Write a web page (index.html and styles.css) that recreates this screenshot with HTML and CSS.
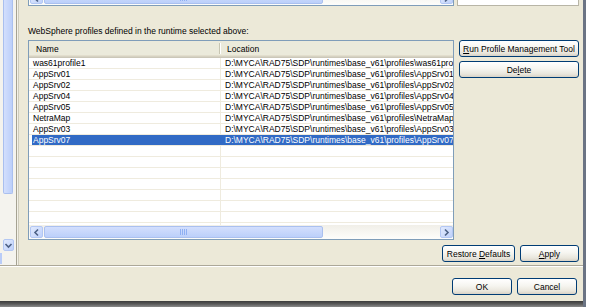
FILE: index.html
```html
<!DOCTYPE html>
<html>
<head>
<meta charset="utf-8">
<link rel="stylesheet" href="styles.css">
</head>
<body>
<div class="window">
  <div class="main">
    <div class="nav">
      <div class="vscroll">
        <div class="vthumb"></div>
        <div class="vtrack"></div>
        <div class="sbtn vbtn"><svg width="9" height="9" viewBox="0 0 9 9"><path d="M1.5 3 L4.5 6 L7.5 3" fill="none" stroke="#4d6185" stroke-width="1.6"/></svg></div>
      </div>
      <div class="nav-foot"><div class="hsliver"></div></div>
    </div>
    <div class="sash"></div>
    <div class="page">
      <div class="remnant">
        <div class="remnant-table">
          <div class="hscroll">
            <div class="sbtn"><svg width="9" height="9" viewBox="0 0 9 9"><path d="M6 1.5 L3 4.5 L6 7.5" fill="none" stroke="#4d6185" stroke-width="1.6"/></svg></div>
            <div class="hthumb"><svg width="8" height="6" viewBox="0 0 8 6"><path d="M0.5 0V6M2.5 0V6M4.5 0V6M6.5 0V6" stroke="#8fb0f3" stroke-width="1"/></svg></div>
            <div class="htrack"></div>
            <div class="sbtn"><svg width="9" height="9" viewBox="0 0 9 9"><path d="M3 1.5 L6 4.5 L3 7.5" fill="none" stroke="#4d6185" stroke-width="1.6"/></svg></div>
          </div>
        </div>
        <div class="remnant-box"></div>
      </div>
      <div class="label">WebSphere profiles defined in the runtime selected above:</div>
      <div class="profiles">
        <div class="table">
          <div class="thead">
            <div class="th th-name">Name</div>
            <div class="th-div"></div>
            <div class="th th-loc">Location</div>
          </div>
          <div class="tbody">
            <div class="row"><div class="c-name">was61profile1</div><div class="c-loc">D:\MYCA\RAD75\SDP\runtimes\base_v61\profiles\was61profile1</div></div>
            <div class="row"><div class="c-name">AppSrv01</div><div class="c-loc">D:\MYCA\RAD75\SDP\runtimes\base_v61\profiles\AppSrv01</div></div>
            <div class="row"><div class="c-name">AppSrv02</div><div class="c-loc">D:\MYCA\RAD75\SDP\runtimes\base_v61\profiles\AppSrv02</div></div>
            <div class="row"><div class="c-name">AppSrv04</div><div class="c-loc">D:\MYCA\RAD75\SDP\runtimes\base_v61\profiles\AppSrv04</div></div>
            <div class="row"><div class="c-name">AppSrv05</div><div class="c-loc">D:\MYCA\RAD75\SDP\runtimes\base_v61\profiles\AppSrv05</div></div>
            <div class="row"><div class="c-name">NetraMap</div><div class="c-loc">D:\MYCA\RAD75\SDP\runtimes\base_v61\profiles\NetraMap</div></div>
            <div class="row"><div class="c-name">AppSrv03</div><div class="c-loc">D:\MYCA\RAD75\SDP\runtimes\base_v61\profiles\AppSrv03</div></div>
            <div class="row sel"><div class="c-name">AppSrv07</div><div class="c-loc">D:\MYCA\RAD75\SDP\runtimes\base_v61\profiles\AppSrv07</div></div>
            <div class="row"><div class="c-name"></div><div class="c-loc"></div></div>
            <div class="row"><div class="c-name"></div><div class="c-loc"></div></div>
            <div class="row"><div class="c-name"></div><div class="c-loc"></div></div>
            <div class="row"><div class="c-name"></div><div class="c-loc"></div></div>
            <div class="row"><div class="c-name"></div><div class="c-loc"></div></div>
            <div class="row"><div class="c-name"></div><div class="c-loc"></div></div>
            <div class="row"><div class="c-name"></div><div class="c-loc"></div></div>
            <div class="row"><div class="c-name"></div><div class="c-loc"></div></div>
          </div>
          <div class="hscroll">
            <div class="sbtn"><svg width="9" height="9" viewBox="0 0 9 9"><path d="M6 1.5 L3 4.5 L6 7.5" fill="none" stroke="#4d6185" stroke-width="1.6"/></svg></div>
            <div class="hthumb"><svg width="8" height="6" viewBox="0 0 8 6"><path d="M0.5 0V6M2.5 0V6M4.5 0V6M6.5 0V6" stroke="#8fb0f3" stroke-width="1"/></svg></div>
            <div class="htrack"></div>
            <div class="sbtn"><svg width="9" height="9" viewBox="0 0 9 9"><path d="M3 1.5 L6 4.5 L3 7.5" fill="none" stroke="#4d6185" stroke-width="1.6"/></svg></div>
          </div>
        </div>
        <div class="side-buttons">
          <div class="btn"><span><u>R</u>un Profile Management Tool</span></div>
          <div class="btn"><span>De<u>l</u>ete</span></div>
        </div>
      </div>
      <div class="page-buttons">
        <div class="btn btn-restore"><span>Restore <u>D</u>efaults</span></div>
        <div class="btn btn-apply"><span><u>A</u>pply</span></div>
      </div>
    </div>
  </div>
  <div class="separator"></div>
  <div class="footer">
    <div class="btn btn-dlg"><span>OK</span></div>
    <div class="btn btn-dlg"><span>Cancel</span></div>
  </div>
  <div class="bottom-edge"></div>
</div>
</body>
</html>
```

FILE: styles.css
```css
* { box-sizing: border-box; }
html, body { margin: 0; padding: 0; }
body {
  width: 589px;
  height: 307px;
  overflow: hidden;
  background: #fff;
  font-family: "Liberation Sans", Arial, sans-serif;
  font-size: 8.5px;
  color: #000;
}
.window {
  width: 586px;
  height: 307px;
  display: flex;
  flex-direction: column;
  background: #ece9d8;
  border-right: 3px solid #6b7484;
}
.main { height: 265px; display: flex; }

/* left navigation strip */
.nav { width: 16px; display: flex; flex-direction: column; background: #f4f3ee; }
.vscroll { height: 252px; display: flex; flex-direction: column; align-items: center; }
.vthumb {
  width: 10px; height: 194px;
  border: 1px solid #a9bfef; border-top: none;
  border-radius: 0 0 2px 2px;
  background: linear-gradient(90deg, #d3dffd, #bccffa);
}
.vtrack { flex: 1; }
.sbtn {
  width: 13px; height: 12px;
  border: 1px solid #b3c7f3; border-radius: 2px;
  background: linear-gradient(135deg, #e1eafe, #bfd1fa);
  display: flex; align-items: center; justify-content: center;
}
.vbtn { width: 11px; height: 12px; margin-bottom: 1px; }
.nav-foot { flex: 1; display: flex; align-items: center; }
.hsliver { width: 2px; height: 11px; background: #b9ccf8; }
.sash {
  width: 3px;
  border-left: 1px solid #a5a292;
  border-right: 1px solid #cfccbd;
  background: #f3f1e8;
}

/* preference page */
.page { flex: 1; display: flex; flex-direction: column; padding: 0 4px 0 9px; }
.remnant { height: 6px; display: flex; gap: 3px; }
.remnant-table {
  width: 426px; height: 6px;
  border: 1px solid #7f9db9; border-top: none;
  background: #fff;
  display: flex; align-items: flex-end; overflow: hidden;
}
.remnant-table .hscroll { flex: none; width: 100%; }
.remnant-box {
  flex: 1; height: 6px;
  border: 1px solid #b8b5a6; border-top: none;
  background: #fff;
}
.label { margin-top: 20px; height: 11px; line-height: 11px; white-space: nowrap; }
.profiles { margin-top: 3px; display: flex; gap: 5px; }
.table {
  width: 426px; height: 200px;
  border: 1px solid #7f9db9;
  background: #fff;
  display: flex; flex-direction: column;
}
.thead {
  height: 17px; display: flex; align-items: center;
  background: linear-gradient(#ebeadb 0 14px, #e2decd 14px 15px, #d6d2c2 15px 16px, #cbc7b8 16px);
}
.th { line-height: 14px; padding-bottom: 2px; white-space: nowrap; }
.th-name { width: 190px; padding-left: 7px; }
.th-div { width: 2px; height: 11px; border-left: 1px solid #c7c5b2; background: #fff; margin-bottom: 2px; }
.th-loc { padding-left: 6px; }
.tbody { flex: 1; overflow: hidden; }
.row {
  height: 11px; line-height: 10px;
  display: flex; padding-left: 3px;
  border-bottom: 1px solid #efebde;
  white-space: nowrap;
}
.c-name { width: 189px; padding-left: 1px; border-right: 1px solid #efebde; }
.c-loc { flex: 1; padding-left: 4px; overflow: hidden; }
.row.sel .c-name, .row.sel .c-loc { background: #316ac5; color: #fff; border-color: #316ac5; }

.hscroll {
  height: 14px; display: flex; gap: 1px;
  padding: 1px 0 1px 1px;
  background: linear-gradient(#f1efe8, #fdfdfb);
}
.hthumb {
  width: 279px;
  border: 1px solid #aac0ef; border-radius: 2px;
  background: linear-gradient(#d3dffd, #bcd0fa);
  display: flex; align-items: center; justify-content: center;
}
.htrack { flex: 1; }

/* buttons */
.btn {
  height: 17px;
  border: 1px solid #003c74; border-radius: 3px;
  background: linear-gradient(#ffffff, #f6f5f0 45%, #e9e6dc 80%, #d8d2c6);
  display: flex; align-items: center; justify-content: center;
  white-space: nowrap;
}
.side-buttons { width: 120px; display: flex; flex-direction: column; gap: 4px; }
.page-buttons { margin-top: 5px; display: flex; justify-content: flex-end; gap: 5px; }
.btn-restore { width: 73px; }
.btn-apply { width: 59px; }
.separator { height: 2px; border-top: 1px solid #aca899; border-bottom: 1px solid #fff; }
.footer { flex: 1; display: flex; justify-content: flex-end; align-items: flex-start; gap: 5px; padding: 11px 6px 0 0; }
.btn-dlg { width: 60px; }
.bottom-edge { height: 6px; background: linear-gradient(#3c3c3c, #5a5a5a 50%, #8c8c8c); }
```
